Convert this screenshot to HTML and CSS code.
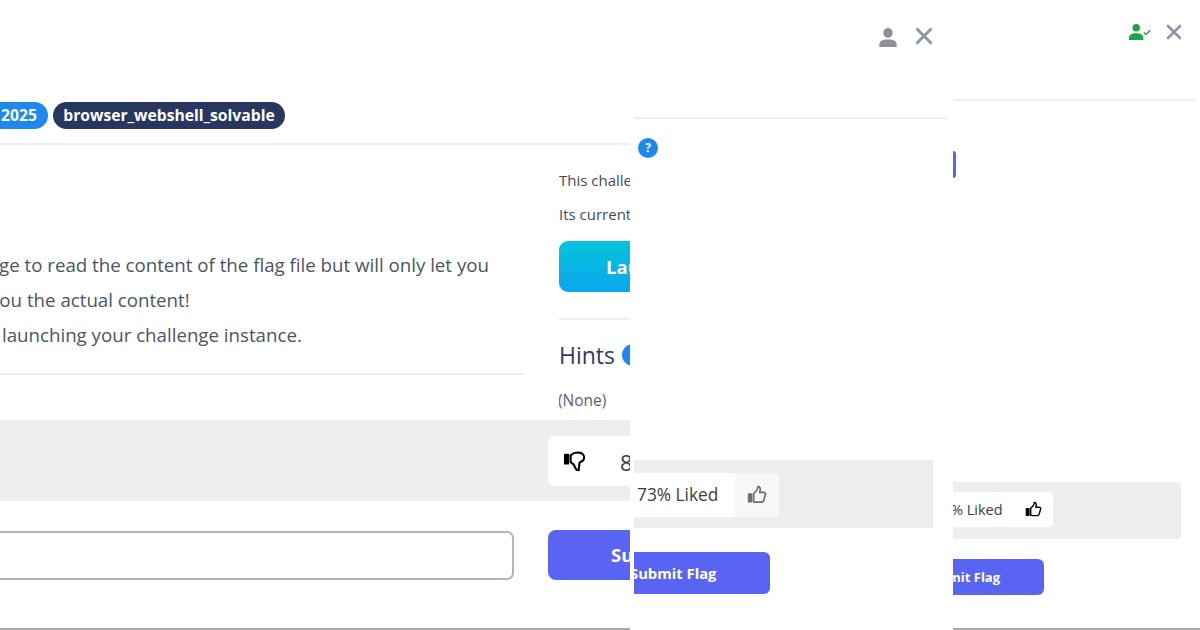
FILE: index.html
```html
<!DOCTYPE html>
<html lang="en">
<head>
<meta charset="utf-8">
<title>Challenge windows</title>
<link rel="stylesheet" href="styles.css">
</head>
<body>
<section class="window win-a">
  <div class="tags">
    <span class="tag tag-blue">2025</span>
    <span class="tag tag-navy">browser_webshell_solvable</span>
  </div>
  <div class="a-body">
    <div class="a-main">
      <p class="desc-line first">ge to read the content of the flag file but will only let you</p>
      <p class="desc-line second">you the actual content!</p>
      <p class="desc-line third">launching your challenge instance.</p>
    </div>
    <aside class="a-side">
      <p class="side-line">This challe</p>
      <p class="side-line">Its current</p>
      <div class="launch">Lau</div>
      <div class="hints"><span class="hints-title">Hints</span><span class="hints-dot"></span></div>
      <p class="none">(None)</p>
    </aside>
  </div>
  <div class="a-rating">
    <div class="a-card">
      <svg class="thumb" viewBox="0 0 24 24"><use href="#thumb-down"/></svg>
      <span class="a-count">8</span>
    </div>
  </div>
  <div class="a-submit">
    <div class="a-input"></div>
    <div class="a-button">Su</div>
  </div>
</section>

<section class="window win-b">
  <div class="b-icons">
    <svg class="user" viewBox="0 0 24 24"><circle cx="12" cy="7.500" r="5.200"/><path d="M2.500 23v-2.600c0-3.600 3.200-5.600 9.500-5.600s9.500 2 9.500 5.600V23z"/></svg>
    <svg class="close" viewBox="0 0 16 16"><path d="M2 2l12 12M14 2L2 14"/></svg>
  </div>
  <div class="b-rule"></div>
  <div class="help">?</div>
  <div class="b-rating">
    <div class="b-card">
      <span class="b-liked">73% Liked</span>
      <span class="b-vote"><svg class="thumb muted" viewBox="0 0 24 24"><use href="#thumb-up"/></svg></span>
    </div>
  </div>
  <div class="b-button">Submit Flag</div>
</section>

<section class="window win-c">
  <div class="c-icons">
    <svg class="user-ok" viewBox="0 0 26 20"><circle cx="8.500" cy="5" r="4.500"/><path d="M0 19.500v-2.500c0-3.500 3-5.500 8.500-5.500s8.500 2 8.500 5.500v2.500z"/><path class="tick" d="M17.500 10.500l2.500 2.500 5-5"/></svg>
    <svg class="close" viewBox="0 0 16 16"><path d="M2 2l12 12M14 2L2 14"/></svg>
  </div>
  <div class="c-rule"></div>
  <div class="c-sliver"></div>
  <div class="c-rating">
    <div class="c-card">
      <span class="c-liked">% Liked</span>
      <svg class="thumb" viewBox="0 0 24 24"><use href="#thumb-up"/></svg>
    </div>
  </div>
  <div class="c-button">mit Flag</div>
</section>

<svg class="defs" aria-hidden="true">
  <defs>
    <g id="thumb-up">
      <rect x="1" y="10" width="5.500" height="11" rx="1" fill="currentColor"/>
      <path d="M8 10.500l4-4.500c.8-1 .8-2.500 1-4 2-.3 3.300 1.500 2.800 4l-.6 2.800h4.800c1.600 0 2.500 1.300 2 2.800l-2 7c-.4 1.300-1.400 2-2.600 2H10c-1 0-2-.5-2-.5z" fill="none" stroke="currentColor" stroke-width="2" stroke-linejoin="round"/>
    </g>
    <g id="thumb-down">
      <rect x="1" y="4" width="5.500" height="11" rx="1" fill="currentColor"/>
      <path d="M8 5.500c3-2.500 6-3.500 10-2.500 2.500.6 4.500 3 4 5.500-.3 2-1.600 3.200-3.200 3.600l-1.600 1.200-.8 7.700c-1.700.3-2.700-.6-3.400-2l-1.600-3.500L8 12.500z" fill="none" stroke="currentColor" stroke-width="2.200" stroke-linejoin="round"/>
    </g>
  </defs>
</svg>
</body>
</html>
```
FILE: styles.css
```css
* { box-sizing: border-box; }
html, body { margin: 0; height: 100%; }
body {
  position: relative;
  width: 1200px;
  height: 630px;
  overflow: hidden;
  background: #fff;
  font-family: "Open Sans", "Noto Sans", sans-serif;
  color: #4a5568;
}
p { margin: 0; }
.defs { width: 0; height: 0; position: absolute; }

/* Overlapping windows on a free canvas */
.window {
  position: absolute;
  top: 0;
  height: 630px;
  overflow: hidden;
  background: #fff;
}
.win-a { left: 0; width: 630px; border-bottom: 2px solid #a9a9ad; padding-top: 102px; }
.win-b { left: 634px; width: 318px; }
.win-c { left: 953px; width: 247px; border-bottom: 2px solid #a9a9ad; }

/* Window A */
.tags {
  display: flex;
  gap: 5px;
  height: 43px;
  border-bottom: 2px solid #eef0f3;
  align-items: flex-start;
}
.tag {
  height: 27px;
  border-radius: 14px;
  color: #fff;
  font-weight: 700;
  font-size: 15.700px;
  line-height: 27px;
}
.tag-blue {
  width: 48px;
  padding-left: 1px;
  background: #1e88ef;
  border-radius: 0 14px 14px 0;
}
.tag-navy { width: 232px; background: #27375f; text-align: center; white-space: nowrap; }

.a-body { display: flex; height: 275px; }
.a-main {
  width: 524px;
  height: 230px;
  padding-top: 102px;
  border-bottom: 2px solid #eceef1;
  font-size: 18.700px;
  line-height: 35px;
  white-space: nowrap;
  overflow: hidden;
}
.desc-line.first { text-indent: -1px; }
.desc-line.second { text-indent: -10px; }
.desc-line.third { text-indent: 2px; }

.a-side { margin-left: 35px; width: 71px; padding-top: 18px; overflow: hidden; white-space: nowrap; }
.side-line { font-size: 15px; line-height: 34px; color: #3f4a5f; }
.launch {
  width: 200px;
  height: 51px;
  margin-top: 10px;
  padding-left: 47px;
  border-radius: 9px;
  background: linear-gradient(180deg, #05c4da, #0ba6ec);
  color: #fff;
  font-weight: 700;
  font-size: 18.500px;
  line-height: 51px;
}
.hints {
  display: flex;
  align-items: center;
  gap: 7px;
  margin-top: 26px;
  padding-top: 18px;
  border-top: 2px solid #eef0f3;
  height: 54px;
}
.hints-title { font-size: 23px; line-height: 34px; color: #2f3d59; }
.hints-dot { flex: none; width: 22px; height: 22px; border-radius: 50%; background: #1e88ef; }
.none { margin-top: 17px; margin-left: -1px; font-size: 15.500px; line-height: 22px; color: #5a6270; }

.a-rating { height: 81px; background: #eee; padding: 16px 0 0 548px; }
.a-card {
  display: flex;
  align-items: center;
  width: 120px;
  height: 50px;
  padding-left: 15px;
  border-radius: 7px;
  background: #fff;
  color: #000;
}
.a-count { margin-left: 34px; margin-top: 2px; font-size: 22px; color: #3b3b3b; }
.thumb { width: 23px; height: 23px; flex: none; color: #000; }
.thumb.muted { color: #6b6f75; width: 20px; height: 20px; }

.a-submit { display: flex; align-items: flex-start; padding-top: 29px; }
.a-input {
  flex: none;
  margin-left: -10px;
  width: 524px;
  height: 49px;
  margin-top: 1px;
  border: 2px solid #b4b5bc;
  border-radius: 7px;
}
.a-button {
  flex: none;
  width: 200px;
  height: 50px;
  margin-left: 34px;
  padding-left: 63px;
  border-radius: 8px;
  background: #5a64f2;
  color: #fff;
  font-weight: 700;
  font-size: 18.500px;
  line-height: 50px;
}

/* Window B */
.b-icons { display: flex; align-items: center; justify-content: flex-end; gap: 16px; height: 74px; padding-right: 19px; }
.user { width: 22px; height: 22px; fill: #8c8f9c; }
.close { width: 18px; height: 18px; margin-bottom: 2px; fill: none; stroke: #8d95a8; stroke-width: 2.600; stroke-linecap: round; }
.b-rule { height: 2px; margin: 43px 5px 0 -2px; background: #eef0f3; }
.help {
  width: 20px;
  height: 20px;
  margin: 19px 0 0 4px;
  border-radius: 50%;
  background: #1e88ef;
  color: #fff;
  font-size: 12px;
  font-weight: 700;
  line-height: 20px;
  text-align: center;
}
.b-rating { height: 68px; margin: 302px 19px 0 0; background: #eee; padding-top: 13px; }
.b-card {
  display: flex;
  width: 145px;
  height: 44px;
  border-radius: 0 5px 5px 0;
  background: #fff;
  overflow: hidden;
}
.b-liked { width: 101px; padding-left: 3px; font-size: 17.300px; line-height: 44px; color: #3d3d3d; white-space: nowrap; }
.b-vote { display: flex; align-items: center; justify-content: center; width: 44px; background: #f7f7f7; }
.b-button {
  width: 136px;
  height: 42px;
  margin-top: 24px;
  border-radius: 0 6px 6px 0;
  background: #5a64f2;
  color: #fff;
  font-weight: 700;
  font-size: 14.800px;
  line-height: 42px;
  white-space: nowrap;
  text-indent: -4px;
}

/* Window C */
.c-icons { display: flex; align-items: center; justify-content: flex-end; gap: 15px; height: 64px; padding-right: 18px; }
.user-ok { width: 22px; height: 18px; fill: #22a34a; }
.user-ok .tick { fill: none; stroke: #22a34a; stroke-width: 1.800; }
.win-c .close { width: 16px; height: 16px; margin-bottom: 0; }
.c-rule { height: 2px; margin: 35px 6px 0 0; background: #eef0f3; }
.c-sliver { width: 3px; height: 27px; margin-top: 50px; border-radius: 0 3px 3px 0; background: #5a64f2; }
.c-rating { height: 57px; margin: 304px 19px 0 0; padding-top: 10px; background: #eee; }
.c-card {
  display: flex;
  align-items: center;
  width: 100px;
  height: 35px;
  border-radius: 0 5px 5px 0;
  background: #fff;
}
.c-liked { width: 72px; font-size: 14.500px; color: #3d3d3d; white-space: nowrap; text-indent: -2px; }
.c-card .thumb { width: 17px; height: 17px; }
.c-button {
  width: 91px;
  height: 36px;
  margin-top: 20px;
  border-radius: 0 6px 6px 0;
  background: #5a64f2;
  color: #fff;
  font-weight: 700;
  font-size: 13px;
  line-height: 36px;
  white-space: nowrap;
  text-indent: -5px;
}
```
